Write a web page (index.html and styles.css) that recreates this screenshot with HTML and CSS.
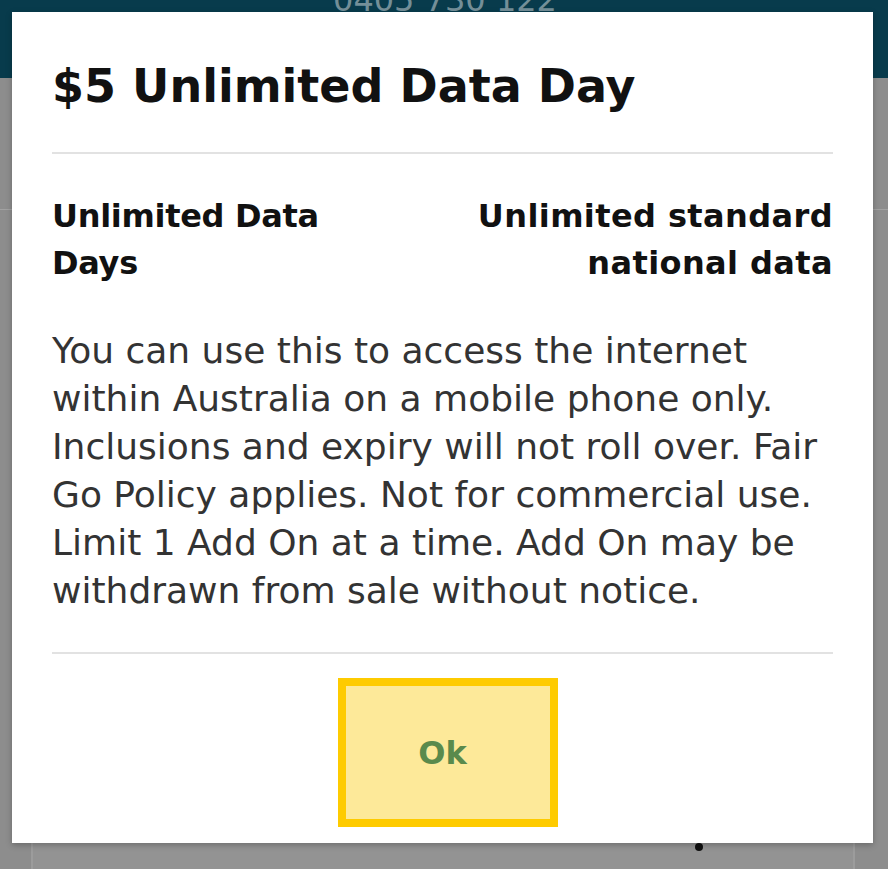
FILE: index.html
```html
<!DOCTYPE html>
<html lang="en">
<head>
    <meta charset="UTF-8">
    <meta name="viewport" content="width=device-width, initial-scale=1.0">
    <title>$5 Unlimited Data Day</title>
    <link rel="stylesheet" href="styles.css">
</head>
<body>
    <div class="pagina">
        <header class="cabecera">
            <div class="numero">0405 730 122</div>
        </header>
        <div class="contenido">
            <div class="separador-fondo"></div>
            <div class="tarjeta-fondo">
                <span class="punto"></span>
            </div>
        </div>
    </div>

    <div class="modal" role="dialog">
        <h2 class="modal-titulo">$5 Unlimited Data Day</h2>
        <div class="modal-fila">
            <div class="fila-nombre">Unlimited Data Days</div>
            <div class="fila-valor">Unlimited standard national data</div>
        </div>
        <p class="modal-texto">You can use this to access the internet within Australia on a mobile phone only. Inclusions and expiry will not roll over. Fair Go Policy applies. Not for commercial use. Limit 1 Add On at a time. Add On may be withdrawn from sale without notice.</p>
        <div class="modal-pie">
            <button class="btn-ok">Ok</button>
        </div>
    </div>
</body>
</html>
```

FILE: styles.css
```css
html, body {
    margin: 0;
    padding: 0;
    height: 100%;
}
body {
    background: #8d8d8d;
    font-family: 'DejaVu Sans', 'Liberation Sans', Arial, sans-serif;
    overflow: hidden;
    position: relative;
}
.pagina {
    height: 100%;
    display: flex;
    flex-direction: column;
}
.cabecera {
    height: 78px;
    background: #083b4c;
    display: flex;
    justify-content: center;
    flex-shrink: 0;
}
.numero {
    margin-top: -19px;
    margin-left: 2px;
    font-size: 32px;
    color: #748f98;
}
.contenido {
    flex: 1;
    display: flex;
    flex-direction: column;
}
.separador-fondo {
    height: 1px;
    background: #a2a2a2;
    margin-top: 131px;
}
.tarjeta-fondo {
    margin: auto 33px 0 31px;
    height: 40px;
    background: #939393;
    border-left: 2px solid #9c9c9c;
    border-right: 2px solid #9c9c9c;
    position: relative;
}
.punto {
    position: absolute;
    left: 662px;
    top: 14px;
    width: 8px;
    height: 8px;
    border-radius: 50%;
    background: #111;
}

/* Ventana modal */
.modal {
    position: absolute;
    top: 12px;
    left: 12px;
    width: 861px;
    height: 831px;
    box-sizing: border-box;
    padding: 0 40px;
    background: #fff;
    box-shadow: 0 2px 6px rgba(0,0,0,0.25);
    display: flex;
    flex-direction: column;
}
.modal-titulo {
    margin: 0;
    padding: 50px 0 42px;
    font-size: 46px;
    line-height: 48px;
    font-weight: 700;
    color: #111;
    border-bottom: 2px solid #e2e2e2;
}
.modal-fila {
    display: flex;
    justify-content: space-between;
    gap: 40px;
    padding-top: 39px;
    font-size: 32px;
    line-height: 47px;
    font-weight: 700;
    color: #111;
}
.fila-nombre {
    width: 300px;
    letter-spacing: -0.3px;
}
.fila-valor {
    width: 400px;
    text-align: right;
    letter-spacing: 0.4px;
}
.modal-texto {
    margin: 0;
    padding: 40px 0 37px;
    font-size: 36px;
    line-height: 48px;
    color: #333;
    border-bottom: 2px solid #e2e2e2;
}
.modal-pie {
    display: flex;
    justify-content: center;
    padding-top: 24px;
}
.btn-ok {
    width: 220px;
    height: 149px;
    margin-left: 11px;
    padding: 0 11px 0 0;
    background: #fde999;
    border: 8px solid #fecb00;
    color: #5a8a4c;
    font-family: inherit;
    font-size: 32px;
    font-weight: 700;
    cursor: pointer;
}
```
